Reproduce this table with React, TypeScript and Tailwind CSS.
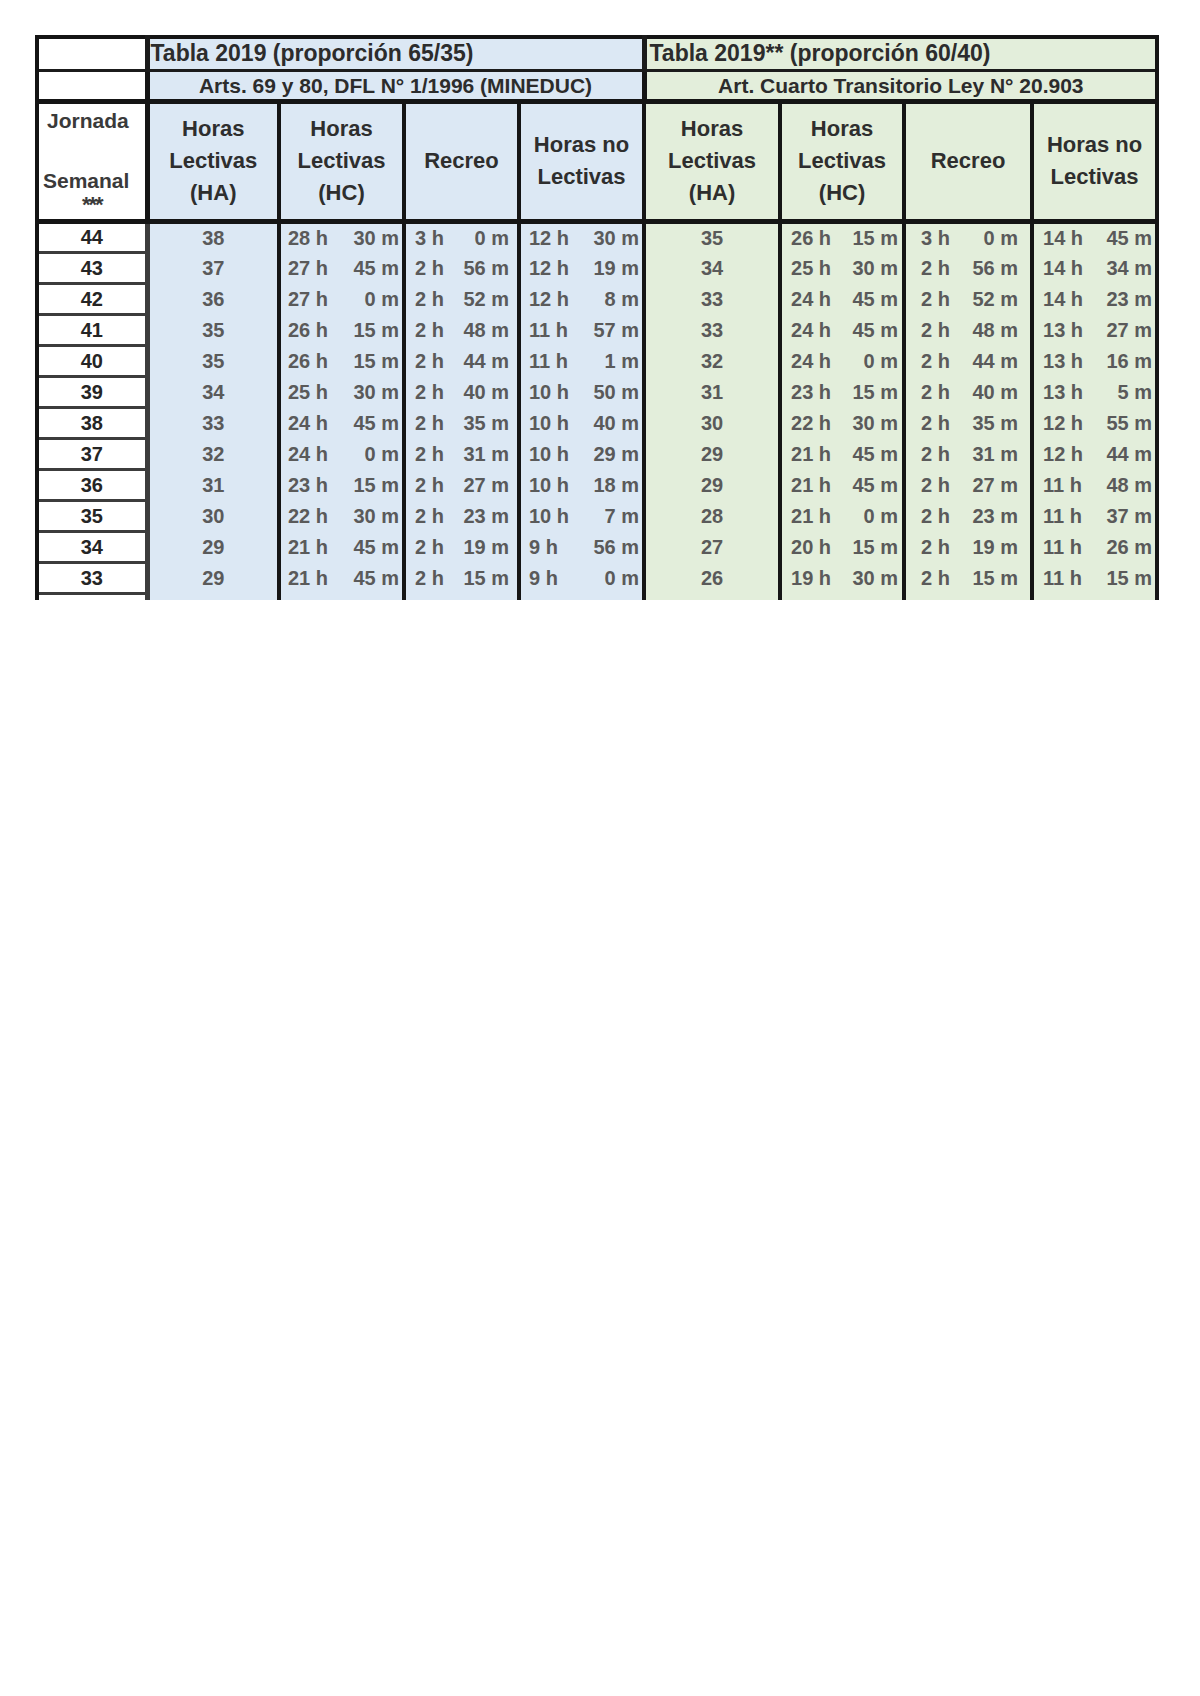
type Time = [number, number];

type Row = {
  j: number;
  ha: number;
  hc: Time;
  rec: Time;
  hn: Time;
  ha2: number;
  hc2: Time;
  rec2: Time;
  hn2: Time;
};

const rows: Row[] = [
  { j: 44, ha: 38, hc: [28, 30], rec: [3, 0], hn: [12, 30], ha2: 35, hc2: [26, 15], rec2: [3, 0], hn2: [14, 45] },
  { j: 43, ha: 37, hc: [27, 45], rec: [2, 56], hn: [12, 19], ha2: 34, hc2: [25, 30], rec2: [2, 56], hn2: [14, 34] },
  { j: 42, ha: 36, hc: [27, 0], rec: [2, 52], hn: [12, 8], ha2: 33, hc2: [24, 45], rec2: [2, 52], hn2: [14, 23] },
  { j: 41, ha: 35, hc: [26, 15], rec: [2, 48], hn: [11, 57], ha2: 33, hc2: [24, 45], rec2: [2, 48], hn2: [13, 27] },
  { j: 40, ha: 35, hc: [26, 15], rec: [2, 44], hn: [11, 1], ha2: 32, hc2: [24, 0], rec2: [2, 44], hn2: [13, 16] },
  { j: 39, ha: 34, hc: [25, 30], rec: [2, 40], hn: [10, 50], ha2: 31, hc2: [23, 15], rec2: [2, 40], hn2: [13, 5] },
  { j: 38, ha: 33, hc: [24, 45], rec: [2, 35], hn: [10, 40], ha2: 30, hc2: [22, 30], rec2: [2, 35], hn2: [12, 55] },
  { j: 37, ha: 32, hc: [24, 0], rec: [2, 31], hn: [10, 29], ha2: 29, hc2: [21, 45], rec2: [2, 31], hn2: [12, 44] },
  { j: 36, ha: 31, hc: [23, 15], rec: [2, 27], hn: [10, 18], ha2: 29, hc2: [21, 45], rec2: [2, 27], hn2: [11, 48] },
  { j: 35, ha: 30, hc: [22, 30], rec: [2, 23], hn: [10, 7], ha2: 28, hc2: [21, 0], rec2: [2, 23], hn2: [11, 37] },
  { j: 34, ha: 29, hc: [21, 45], rec: [2, 19], hn: [9, 56], ha2: 27, hc2: [20, 15], rec2: [2, 19], hn2: [11, 26] },
  { j: 33, ha: 29, hc: [21, 45], rec: [2, 15], hn: [9, 0], ha2: 26, hc2: [19, 30], rec2: [2, 15], hn2: [11, 15] },
];

const BLUE = "bg-[#dce8f4]";
const GREEN = "bg-[#e3eedb]";

function TimeCell({ t, bg, pad }: { t: Time; bg: string; pad: string }) {
  return (
    <td className={`${bg} border-x-[4px] border-y-0 border-[#151515] p-0`}>
      <div className={`flex items-center justify-between ${pad}`}>
        <span>{t[0]} h</span>
        <span>{t[1]} m</span>
      </div>
    </td>
  );
}

function HeadCell({ bg, lines }: { bg: string; lines: string[] }) {
  return (
    <td className={`${bg} border-x-[4px] border-b-[5px] border-[#151515] p-0 text-center align-middle text-[22px] leading-[32px] font-bold text-[#2e2e2e]`}>
      {lines.map((l) => (
        <div key={l}>{l}</div>
      ))}
    </td>
  );
}

export default function App() {
  return (
    <div className="min-h-[1696px] w-[1200px] bg-white">
      {/* the scan is cut just below the 33 row */}
      <div className="h-[600px] overflow-hidden pl-[35px] pt-[35px]">
        <table className="w-[1122px] table-fixed border-collapse border-[4px] border-[#141414] font-['Liberation_Sans',Arial,sans-serif]">
          <colgroup>
            <col className="w-[110px]" />
            <col className="w-[132px]" />
            <col className="w-[125px]" />
            <col className="w-[115px]" />
            <col className="w-[125px]" />
            <col className="w-[136px]" />
            <col className="w-[124px]" />
            <col className="w-[128px]" />
            <col className="w-[125px]" />
          </colgroup>
          <tbody>
            <tr className="h-[33px]">
              <td className="border-r-[5px] border-b-[3px] border-[#1b1b1b] bg-white p-0" />
              <td colSpan={4} className={`${BLUE} border-b-[3px] border-r-[5px] border-[#1b1b1b] p-0 pl-[1px] text-left text-[23px] font-bold leading-none text-[#2c2c2c] whitespace-nowrap`}>
                Tabla 2019 (proporción 65/35)
              </td>
              <td colSpan={4} className={`${GREEN} border-b-[3px] border-[#1b1b1b] p-0 pl-[3px] text-left text-[23px] font-bold leading-none text-[#2c2c2c] whitespace-nowrap`}>
                Tabla 2019** (proporción 60/40)
              </td>
            </tr>
            <tr className="h-[31px]">
              <td className="border-r-[5px] border-b-[5px] border-[#151515] bg-white p-0" />
              <td colSpan={4} className={`${BLUE} border-b-[5px] border-r-[5px] border-[#151515] p-0 text-center text-[21px] font-bold leading-none text-[#2c2c2c] whitespace-nowrap`}>
                Arts. 69 y 80, DFL N° 1/1996 (MINEDUC)
              </td>
              <td colSpan={4} className={`${GREEN} border-b-[5px] border-[#151515] p-0 text-center text-[21px] font-bold leading-none text-[#2c2c2c] whitespace-nowrap`}>
                Art. Cuarto Transitorio Ley N° 20.903
              </td>
            </tr>
            <tr className="h-[120px]">
              <td className="overflow-hidden border-r-[5px] border-b-[5px] border-[#151515] bg-white p-0 align-top">
                <div className="flex h-[114px] flex-col overflow-hidden text-[21px] font-bold text-[#3a3a3a]">
                  <div className="pl-[8px] pt-[5px] leading-[24px]">Jornada</div>
                  <div className="mt-[36px] whitespace-nowrap pl-[4px] leading-[24px]">Semanal</div>
                  <div className="mt-[4px] text-center text-[22px] leading-[16px] tracking-[-2px]">***</div>
                </div>
              </td>
              <HeadCell bg={BLUE} lines={["Horas", "Lectivas", "(HA)"]} />
              <HeadCell bg={BLUE} lines={["Horas", "Lectivas", "(HC)"]} />
              <HeadCell bg={BLUE} lines={["Recreo"]} />
              <HeadCell bg={BLUE} lines={["Horas no", "Lectivas"]} />
              <HeadCell bg={GREEN} lines={["Horas", "Lectivas", "(HA)"]} />
              <HeadCell bg={GREEN} lines={["Horas", "Lectivas", "(HC)"]} />
              <HeadCell bg={GREEN} lines={["Recreo"]} />
              <HeadCell bg={GREEN} lines={["Horas no", "Lectivas"]} />
            </tr>
            {rows.map((r) => (
              <tr key={r.j} className="h-[31px] text-[20px] font-bold leading-none text-[#5a5a5a]">
                <td className="border-r-[5px] border-b-[3px] border-[#3c3c3c] bg-white p-0 text-center text-[#252525]">
                  {r.j}
                </td>
                <td className={`${BLUE} border-x-[4px] border-y-0 border-[#151515] p-0 text-center`}>{r.ha}</td>
                <TimeCell t={r.hc} bg={BLUE} pad="pl-[7px] pr-[3px]" />
                <TimeCell t={r.rec} bg={BLUE} pad="pl-[9px] pr-[8px]" />
                <TimeCell t={r.hn} bg={BLUE} pad="pl-[8px] pr-[3px]" />
                <td className={`${GREEN} border-x-[4px] border-y-0 border-[#151515] p-0 text-center`}>{r.ha2}</td>
                <TimeCell t={r.hc2} bg={GREEN} pad="pl-[9px] pr-[4px]" />
                <TimeCell t={r.rec2} bg={GREEN} pad="pl-[15px] pr-[12px]" />
                <TimeCell t={r.hn2} bg={GREEN} pad="pl-[9px] pr-[3px]" />
              </tr>
            ))}
            {/* only the top edge of this row shows in the scan */}
            <tr className="h-[31px]">
              <td className="border-r-[5px] border-[#3c3c3c] bg-white p-0" />
              <td className={`${BLUE} border-x-[4px] border-y-0 border-[#151515] p-0`} />
              <td className={`${BLUE} border-x-[4px] border-y-0 border-[#151515] p-0`} />
              <td className={`${BLUE} border-x-[4px] border-y-0 border-[#151515] p-0`} />
              <td className={`${BLUE} border-x-[4px] border-y-0 border-[#151515] p-0`} />
              <td className={`${GREEN} border-x-[4px] border-y-0 border-[#151515] p-0`} />
              <td className={`${GREEN} border-x-[4px] border-y-0 border-[#151515] p-0`} />
              <td className={`${GREEN} border-x-[4px] border-y-0 border-[#151515] p-0`} />
              <td className={`${GREEN} border-x-[4px] border-y-0 border-[#151515] p-0`} />
            </tr>
          </tbody>
        </table>
      </div>
    </div>
  );
}
